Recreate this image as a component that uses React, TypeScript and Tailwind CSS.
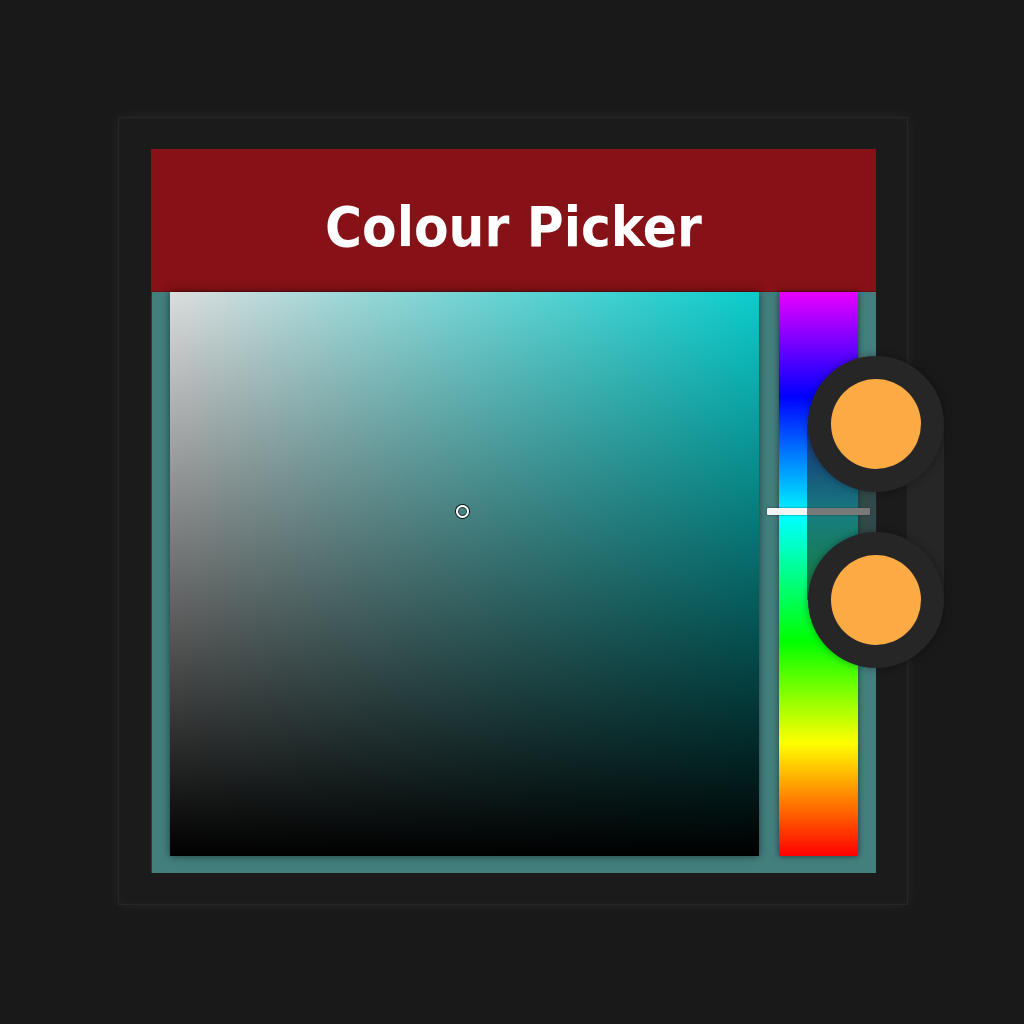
import React from "react";

export default function App() {
  return (
    <div className="flex h-screen w-full items-center justify-center bg-[#191919] pb-[2px] pl-[2px]">
      <div className="relative w-[790px] h-[788px] border border-[#262626] bg-[#1b1b1b] pl-[32px] pr-[31px] pt-[31px] pb-[31px] shadow-[0_0_14px_rgba(255,255,255,0.06),inset_0_0_6px_rgba(255,255,255,0.03)]">
        <div className="flex h-[724px] w-[725px] flex-col">
          <div className="h-[143px] shrink-0 border-b border-[#6c0b10] bg-[#861116] pt-[50px] text-center">
            <span className="font-['DejaVu_Sans_Condensed','DejaVu_Sans',sans-serif] font-stretch-condensed text-[56px] font-bold leading-[56px] text-white">
              Colour Picker
            </span>
          </div>
          <div className="flex flex-1 gap-[20px] border-l border-[#5a2a2a] bg-[#437f7d] pb-[17px] pl-[18px] pr-[18px]">
            <div
              className="relative h-full w-[589px] shadow-[0_0_8px_rgba(0,0,0,0.55)]"
              style={{
                background:
                  "linear-gradient(to bottom, rgba(0,0,0,0) 0%, #000 100%), linear-gradient(to right, #dcdcdc 0%, #0bcccc 100%)",
              }}
            >
              <div className="absolute left-[286px] top-[213px] h-[13px] w-[13px] rounded-full border-2 border-white shadow-[0_0_0_1px_rgba(0,0,0,0.85),inset_0_0_0_1px_rgba(0,0,0,0.6)]" />
            </div>
            <div
              className="h-full w-[79px] shadow-[0_0_6px_rgba(0,0,0,0.55)]"
              style={{
                background:
                  "linear-gradient(to bottom, #e800ff 0%, #0000ff 18.5%, #00ffff 40%, #00ff00 62%, #ffff00 80%, #ff0000 100%)",
              }}
            />
          </div>
        </div>

        {/* hue marker */}
        <div className="absolute left-[648px] top-[390px] h-[7px] w-[103px] rounded-[1px] bg-[#f4f4f4] shadow-[0_0_2px_rgba(0,0,0,0.6)]" />

        {/* knob overlay */}
        <div className="absolute left-[688px] top-[306px] h-[176px] w-[70px] bg-[rgba(38,38,38,0.6)]" />
        <div className="absolute left-[789px] top-[306px] h-[176px] w-[36px] bg-[#262626]" />
        <div className="absolute left-[689px] top-[238px] flex h-[136px] w-[136px] items-center justify-center rounded-full bg-[#262626] shadow-[0_0_8px_rgba(0,0,0,0.35)]">
          <div className="h-[90px] w-[90px] rounded-full bg-[#fcaa44]" />
        </div>
        <div className="absolute left-[689px] top-[414px] flex h-[136px] w-[136px] items-center justify-center rounded-full bg-[#262626] shadow-[0_0_8px_rgba(0,0,0,0.35)]">
          <div className="h-[90px] w-[90px] rounded-full bg-[#fcaa44]" />
        </div>
      </div>
    </div>
  );
}
